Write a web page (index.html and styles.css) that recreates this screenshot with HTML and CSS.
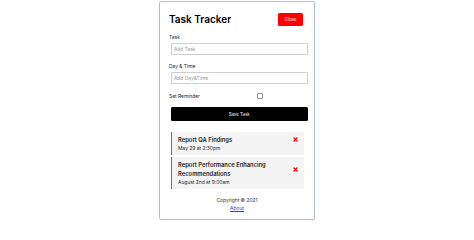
FILE: index.html
```html
<!DOCTYPE html>
<html lang="en">
<head>
<meta charset="utf-8">
<title>Task Tracker</title>
<link rel="stylesheet" href="styles.css">
</head>
<body>
<div class="container">
  <header class="header">
    <h1 class="title">Task Tracker</h1>
    <button class="btn btn-close">Close</button>
  </header>
  <form class="add-form">
    <div class="form-control">
      <label>Task</label>
      <input type="text" placeholder="Add Task">
    </div>
    <div class="form-control">
      <label>Day &amp; Time</label>
      <input type="text" placeholder="Add Day&amp;Time">
    </div>
    <div class="form-control form-control-check">
      <label>Set Reminder</label>
      <span class="check-wrap"><input type="checkbox" class="check"></span>
    </div>
    <button type="button" class="btn btn-block">Save Task</button>
  </form>
  <div class="tasks">
    <div class="task reminder">
      <h3><span>Report QA Findings</span><svg class="del" viewBox="0 0 10 10"><path d="M2 2L8 8M8 2L2 8"/></svg></h3>
      <p>May 29 at 2:30pm</p>
    </div>
    <div class="task reminder">
      <h3><span>Report Performance Enhancing Recommendations</span><svg class="del" viewBox="0 0 10 10"><path d="M2 2L8 8M8 2L2 8"/></svg></h3>
      <p>August 2nd at 9:00am</p>
    </div>
  </div>
  <footer class="footer">
    <p>Copyright &copy; 2021</p>
    <a href="#">About</a>
  </footer>
</div>
</body>
</html>
```
FILE: styles.css
```css
* { box-sizing: border-box; }
body {
  margin: 0;
  font-family: Inter, "Open Sans", sans-serif;
  background: #fff;
  color: #000;
}
.container {
  width: 156px;
  margin: 1px auto 0;
  border: 1px solid #a9c0d8;
  border-radius: 2px;
  padding: 10.5px 9px 7px 9px;
}
.header {
  display: flex;
  justify-content: space-between;
  align-items: center;
  height: 13.5px;
}
.title {
  margin: 0;
  font-size: 10px;
  font-weight: 600;
  line-height: 1;
}
.btn {
  border: none;
  color: #fff;
  font-family: inherit;
  font-size: 4.4px;
  cursor: pointer;
  border-radius: 1.5px;
  padding: 0;
}
.btn-close {
  background: #ff0000;
  width: 25px;
  height: 13.5px;
  margin-right: 2px;
}
.add-form { margin: 0; }
.form-control { margin-top: 7px; }
.form-control label {
  display: block;
  font-size: 4.9px;
  line-height: 8px;
  color: #222;
}
.form-control input[type="text"] {
  display: block;
  width: 137px;
  height: 12.5px;
  margin: 1.5px 0 0 1.7px;
  border: 1px solid #cfcfcf;
  border-radius: 1px;
  padding: 0 2.3px;
  font-family: inherit;
  font-size: 4.9px;
  outline: none;
}
.form-control input::placeholder { color: #999; }
.form-control-check {
  display: flex;
  align-items: center;
  margin-top: 8px;
  height: 8px;
}
.form-control-check label { flex: 1; }
.check-wrap {
  flex: 2;
  display: flex;
  justify-content: center;
}
.check {
  appearance: none;
  -webkit-appearance: none;
  width: 6px;
  height: 6px;
  margin: 0;
  border: 0.8px solid #8c8c8c;
  border-radius: 1px;
  background: #fff;
}
.btn-block {
  display: block;
  width: 137px;
  height: 14px;
  margin: 7px 0 0 1.7px;
  background: #000;
  font-size: 4.4px;
}
.tasks { margin-top: 11px; }
.task {
  background: #f4f4f4;
  border-left: 1.7px solid #2aa52a;
  margin: 0 1.2px 1.5px 1.8px;
  padding: 3px 6px 3px 6.3px;
}
.task h3 {
  display: flex;
  justify-content: space-between;
  align-items: center;
  margin: 0;
  font-size: 5.8px;
  font-weight: 600;
  line-height: 9.3px;
  color: #222;
}
.task h3 span { flex: 1; }
.del {
  width: 5px;
  height: 5px;
  flex: none;
  margin-left: 4px;
}
.del path {
  stroke: #e00000;
  stroke-width: 2.6;
  stroke-linecap: round;
  fill: none;
}
.task p {
  margin: 0;
  font-size: 4.9px;
  line-height: 8px;
  color: #222;
}
.footer {
  margin-top: 7px;
  text-align: center;
  font-size: 4.9px;
  line-height: 8px;
}
.footer p { margin: 0; color: #333; }
.footer a { color: #3333dd; }
```
